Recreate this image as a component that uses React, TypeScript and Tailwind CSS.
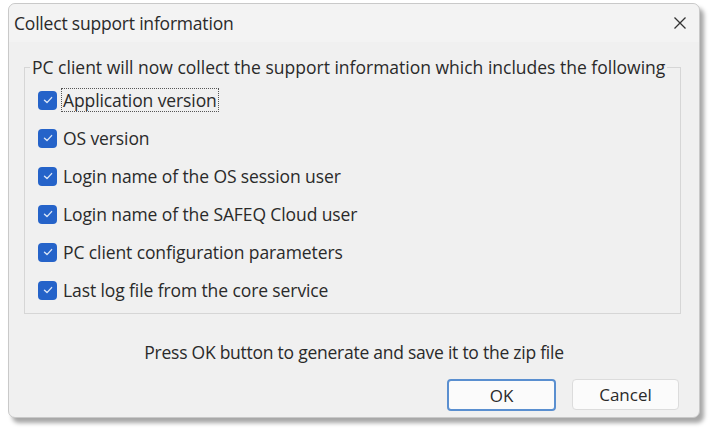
import React from "react";

const items = [
  "Application version",
  "OS version",
  "Login name of the OS session user",
  "Login name of the SAFEQ Cloud user",
  "PC client configuration parameters",
  "Last log file from the core service",
];

function Check() {
  return (
    <span className="flex h-[19px] w-[19px] shrink-0 items-center justify-center rounded-[4px] bg-[#2563c9]">
      <svg width="12" height="12" viewBox="0 0 12 12" fill="none">
        <path d="M2.5 6.3 L5 8.6 L9.6 3.6" stroke="#dce6f7" strokeWidth="1.4" strokeLinecap="round" strokeLinejoin="round" />
      </svg>
    </span>
  );
}

export default function App() {
  return (
    <div className="h-[432px] w-[720px] bg-white pl-[8px] pt-[3px]" style={{ fontFamily: '"Open Sans", "Noto Sans", sans-serif' }}>
      <div className="flex h-[415px] w-[692px] flex-col rounded-[7px] border border-[#c9c9c9] bg-[#f0f0f0] text-[#2a2a2a] shadow-[4px_5px_4px_rgba(0,0,0,0.35)]">
        <div className="flex h-[38px] items-center justify-between rounded-t-[7px] bg-[#f3f3f3] pl-[5px] pr-[12px]">
          <span className="text-[17.5px] tracking-[-0.2px]">Collect support information</span>
          <svg width="14" height="14" viewBox="0 0 14 14">
            <path d="M1.5 1.5 L12.5 12.5 M12.5 1.5 L1.5 12.5" stroke="#333" strokeWidth="1.3" />
          </svg>
        </div>
        <div className="relative ml-[15px] mt-[25px] h-[247px] w-[657px] border border-[#d6d6d6] pl-[13px] pt-[22px]">
          <div className="absolute left-[5px] top-[-12px] bg-[#f0f0f0] px-[2px] text-[17.5px] leading-[22px]">
            PC client will now collect the support information which includes the following
          </div>
          <div className="flex flex-col gap-[18px]">
            {items.map((t, i) => (
              <div key={t} className="flex h-[20px] items-center gap-[4px]">
                <Check />
                <span
                  className={
                    "px-[1px] text-[17.5px] leading-[22px] tracking-[-0.1px] " +
                    (i === 0 ? "border border-dotted border-[#555]" : "border border-transparent")
                  }
                >
                  {t}
                </span>
              </div>
            ))}
          </div>
        </div>
        <div className="mt-[25px] text-center text-[17.5px] tracking-[-0.25px]">
          Press OK button to generate and save it to the zip file
        </div>
        <div className="mt-[14px] flex justify-end gap-[16px] pr-[20px]">
          <button className="h-[32px] w-[109px] rounded-[4px] border-2 border-[#5a8fd0] bg-[#fbfbfb] text-[17px]">OK</button>
          <button className="h-[31px] w-[107px] rounded-[4px] border border-[#dcdcdc] bg-[#fbfbfb] text-[17px]">Cancel</button>
        </div>
      </div>
    </div>
  );
}
